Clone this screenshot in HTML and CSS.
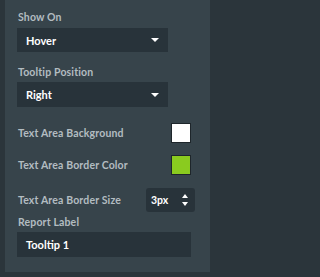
FILE: index.html
```html
<!DOCTYPE html>
<html>
<head>
<meta charset="utf-8">
<link rel="stylesheet" href="styles.css">
</head>
<body>
<div class="panel">
  <div class="label first">Show On</div>
  <div class="select s1"><span>Hover</span><i class="caret"></i></div>
  <div class="label l2">Tooltip Position</div>
  <div class="select s2"><span>Right</span><i class="caret"></i></div>
  <div class="row r1"><span class="label">Text Area Background</span><span class="swatch white"></span></div>
  <div class="row r2"><span class="label">Text Area Border Color</span><span class="swatch green"></span></div>
  <div class="row r3"><span class="label">Text Area Border Size</span>
    <span class="num"><span>3px</span><span class="spin"><i class="up"></i><i class="down"></i></span></span>
  </div>
  <div class="label l4">Report Label</div>
  <div class="input">Tooltip 1</div>
</div>
</body>
</html>
```
FILE: styles.css
```css
html, body {
  margin: 0;
  padding: 0;
  background: #2b353b;
  width: 215px;
  height: 277px;
  overflow: hidden;
}
body {
  font-family: Lato, "Open Sans", sans-serif;
  font-weight: 700;
}
.panel {
  margin-left: 5px;
  width: 205px;
  height: 272px;
  background: #37444b;
  padding: 11px 0 0 12px;
  box-sizing: border-box;
}
.label {
  display: block;
  font-size: 10.5px;
  letter-spacing: 0.15px;
  line-height: 12px;
  height: 12px;
  color: #b3bcc1;
  padding-left: 1px;
  white-space: nowrap;
}
.select {
  margin-top: 5px;
  width: 151px;
  height: 24px;
  background: #28333a;
  display: flex;
  align-items: center;
  justify-content: space-between;
  padding: 0 9px 0 9px;
  box-sizing: border-box;
  color: #ffffff;
  font-size: 11px;
}
.s2 { margin-top: 4px; height: 25px; }
.l2 { margin-top: 14px; }
.caret {
  width: 0;
  height: 0;
  border-left: 4px solid transparent;
  border-right: 4px solid transparent;
  border-top: 4px solid #ffffff;
}
.row {
  display: flex;
  align-items: center;
  justify-content: space-between;
  height: 20px;
  padding-right: 19px;
}
.row .label { display: inline-block; }
.r1 { margin-top: 16px; }
.r2 { margin-top: 12px; }
.r3 { margin-top: 13px; height: 24px; padding-right: 15px; }
.swatch {
  width: 18px;
  height: 18px;
  border: 1px solid #1e262b;
}
.white { background: #ffffff; }
.green { background: #8acb1f; }
.num {
  width: 49px;
  height: 24px;
  background: #28333a;
  border-radius: 3px;
  display: flex;
  align-items: center;
  justify-content: space-between;
  padding: 0 7px 0 5px;
  box-sizing: border-box;
  color: #ffffff;
  font-size: 10.5px;
}
.spin {
  display: flex;
  flex-direction: column;
  align-items: center;
  gap: 4px;
}
.up, .down {
  width: 0;
  height: 0;
  border-left: 3.5px solid transparent;
  border-right: 3.5px solid transparent;
}
.up { border-bottom: 4px solid #ffffff; }
.down { border-top: 4px solid #ffffff; }
.l4 { margin-top: 4px; }
.input {
  margin-top: 4px;
  width: 174px;
  height: 25px;
  background: #28333a;
  color: #ffffff;
  font-size: 11px;
  line-height: 25px;
  padding-left: 9px;
  box-sizing: border-box;
}
```
